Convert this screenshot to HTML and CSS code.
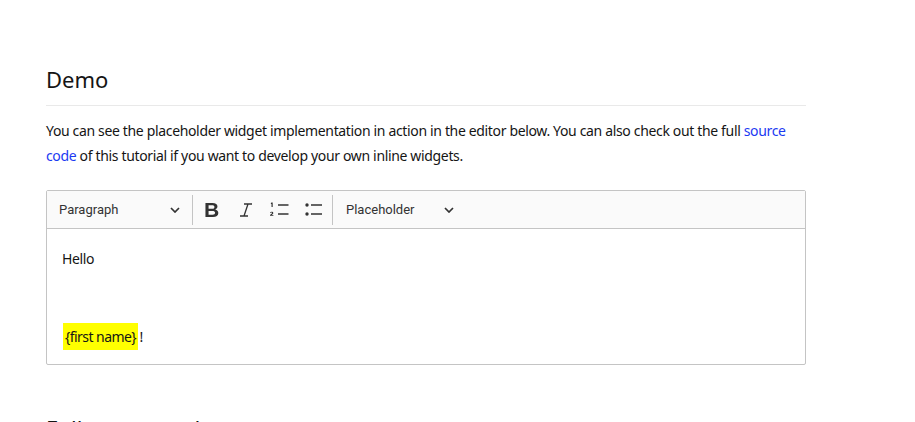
FILE: index.html
```html
<!DOCTYPE html>
<html lang="en">
<head>
<meta charset="utf-8">
<title>Demo</title>
<link rel="stylesheet" href="styles.css">
</head>
<body>
<main class="content">
  <h2 class="heading">Demo</h2>
  <p class="intro">You can see the placeholder widget implementation in action in the editor below. You can also check out the full <a href="#">source code</a> of this tutorial if you want to develop your own inline widgets.</p>
  <section class="editor">
    <div class="toolbar">
      <div class="dropdown dropdown-para">
        <span>Paragraph</span>
        <svg class="chev" viewBox="0 0 10 6" width="10" height="6"><path d="M1 1l4 4 4-4" fill="none" stroke="#333" stroke-width="1.7"/></svg>
      </div>
      <div class="sep"></div>
      <button class="tool" aria-label="Bold"><svg viewBox="0 0 20 20" width="20" height="20"><path transform="translate(10.700 10) scale(1.250 1.100) translate(-10 -9.500)" d="M5 3.200h5.600c2.600 0 4 1.200 4 3.200 0 1.300-.7 2.300-1.900 2.700 1.600.3 2.600 1.500 2.600 3.100 0 2.300-1.600 3.600-4.300 3.600H5zm2.500 5.200h2.800c1.200 0 1.900-.6 1.900-1.700 0-1-.7-1.500-1.900-1.500H7.500zm0 5.500h3.100c1.400 0 2.100-.6 2.100-1.800s-.8-1.800-2.200-1.800h-3z" fill="#333"/></svg></button>
      <button class="tool" aria-label="Italic"><svg viewBox="0 0 20 20" width="20" height="20"><path d="M9 4h8M5 16h8M13 4 9 16" fill="none" stroke="#333" stroke-width="1.300"/></svg></button>
      <button class="tool" aria-label="Numbered list"><svg viewBox="0 0 20 20" width="20" height="20"><path d="M9 5h10.500M9 14h10.500" stroke="#333" stroke-width="1.500" fill="none"/><path d="M2.300 2.500h1.400v4.500H2.500V3.900l-.8.200zM1 12.700c.3-.6.900-.9 1.600-.9 1 0 1.700.5 1.700 1.300 0 .6-.4 1-1.400 1.800h1.500v.9H1v-.8c1.300-1 2-1.500 2-2 0-.3-.2-.4-.5-.4s-.5.200-.7.500z" fill="#333"/></svg></button>
      <button class="tool" aria-label="Bulleted list"><svg viewBox="0 0 20 20" width="20" height="20"><circle cx="4" cy="5" r="1.700" fill="#333"/><circle cx="4" cy="14" r="1.700" fill="#333"/><path d="M8 5h11M8 14h11" stroke="#333" stroke-width="1.500" fill="none"/></svg></button>
      <div class="sep sep-right"></div>
      <div class="dropdown dropdown-ph">
        <span>Placeholder</span>
        <svg class="chev" viewBox="0 0 10 6" width="10" height="6"><path d="M1 1l4 4 4-4" fill="none" stroke="#333" stroke-width="1.700"/></svg>
      </div>
    </div>
    <div class="body">
      <p>Hello</p>
      <p class="last"><span class="placeholder">{first name}</span> !</p>
    </div>
  </section>
  <h2 class="heading next">Full source code</h2>
</main>
</body>
</html>
```
FILE: styles.css
```css
html, body {
  margin: 0;
  padding: 0;
  height: 422px;
  overflow: hidden;
  background: #fff;
}
body {
  font-family: "Noto Sans", "Open Sans", sans-serif;
  color: #151515;
}
.content {
  width: 760px;
  margin-left: 46px;
  padding-top: 65px;
}
.heading {
  margin: 0;
  font-size: 22px;
  font-weight: 400;
  line-height: 28px;
  padding-bottom: 12px;
  border-bottom: 1px solid #e9e9e9;
  letter-spacing: 0;
}
.intro {
  margin: 0;
  padding-top: 12px;
  font-size: 14px;
  line-height: 25px;
  letter-spacing: -.345px;
  width: 745px;
}
.intro a {
  color: #1b3af2;
  text-decoration: none;
}
.editor {
  margin-top: 22px;
  border: 1px solid #c4c4c4;
  border-radius: 2px;
}
.toolbar {
  height: 37px;
  display: flex;
  align-items: center;
  background: #fafafa;
  border-bottom: 1px solid #c4c4c4;
  font-family: Roboto, "Liberation Sans", sans-serif;
  font-size: 13px;
  color: #333;
}
.dropdown {
  display: flex;
  align-items: center;
  justify-content: space-between;
  box-sizing: border-box;
}
.dropdown-para {
  width: 145px;
  padding-left: 12px;
  padding-right: 12px;
}
.dropdown-ph {
  width: 132px;
  padding-left: 13px;
  padding-right: 11px;
}
.sep {
  width: 1px;
  height: 30px;
  background: #c4c4c4;
  margin-right: 3px;
}
.sep-right {
  margin: 0;
}
.tool {
  width: 30px;
  height: 30px;
  padding: 0;
  margin: 0 4px 0 0;
  border: 0;
  background: none;
  display: flex;
  align-items: center;
  justify-content: center;
}
.body {
  height: 135px;
  padding: 20px 15px 0;
  box-sizing: border-box;
  font-size: 14px;
  line-height: 20px;
  letter-spacing: -.345px;
}
.body p { margin: 0; }
.body .last { margin-top: 58px; }
.placeholder {
  background: #ff0;
  padding: 4px 2px;
  margin-left: 1px;
  margin-right: -2px;
  letter-spacing: -.55px;
}
.next {
  margin-top: 49px;
  border: 0;
}
```
